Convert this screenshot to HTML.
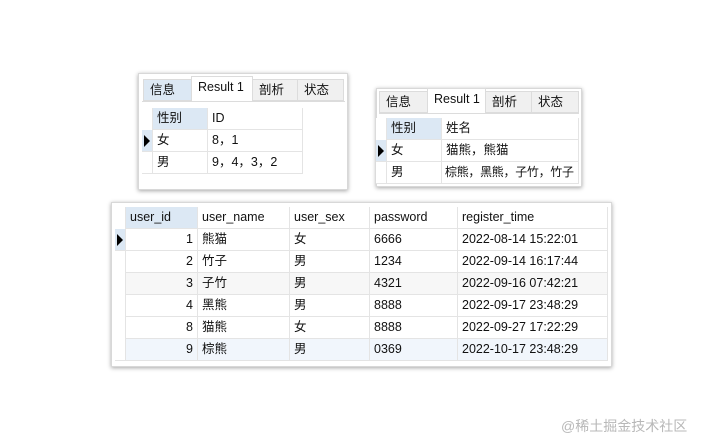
<!DOCTYPE html>
<html><head><meta charset="utf-8"><style>
*{margin:0;padding:0;box-sizing:border-box}
body{width:709px;height:448px;background:#fff;position:relative;overflow:hidden;font-family:"Liberation Sans","Noto Sans CJK SC",sans-serif;font-size:12.5px;color:#111}
.p{position:absolute;background:#fff;border:1px solid #d8d8d8;box-shadow:0 1px 4px rgba(0,0,0,.35)}
.a{position:absolute;white-space:nowrap}
.tab{position:absolute;background:#f0f0f0;border:1px solid #dcdcdc;padding:0 0 0 6px;height:22px;line-height:21px}
.c{position:absolute;border-right:1px solid #e4e4e4;border-bottom:1px solid #e4e4e4;height:22px;line-height:21px;padding:0 4px;white-space:nowrap;overflow:hidden}
.tri{position:absolute;width:0;height:0;border-left:6px solid #000;border-top:6px solid transparent;border-bottom:6px solid transparent}
</style></head><body>

<!-- panel 1 -->
<div class="p" style="left:138px;top:73px;width:210px;height:117px"></div>
<div class="tab" style="left:143px;top:79px;width:50px;background:#dce8f4">信息</div>
<div class="tab" style="left:252px;top:79px;width:46px">剖析</div>
<div class="tab" style="left:297px;top:79px;width:47px">状态</div>
<div class="tab" style="left:191px;top:76px;width:62px;height:25px;background:#fff;border-bottom:none">Result 1</div>
<div style="position:absolute;left:142px;top:101px;width:203px;height:1px;background:#dcdcdc"></div>
<div class="c" style="left:142px;top:108px;width:11px;height:66px;background:#fff"></div>
<div class="c" style="left:142px;top:130px;width:11px;background:#dce8f4"></div>
<div class="tri" style="left:144px;top:135px"></div>
<div class="c" style="left:153px;top:108px;width:55px;background:#dce8f4">性别</div>
<div class="c" style="left:208px;top:108px;width:95px">ID</div>
<div class="c" style="left:153px;top:130px;width:55px">女</div>
<div class="c" style="left:208px;top:130px;width:95px">8，1</div>
<div class="c" style="left:153px;top:152px;width:55px">男</div>
<div class="c" style="left:208px;top:152px;width:95px">9，4，3，2</div>

<!-- panel 2 -->
<div class="p" style="left:376px;top:88px;width:206px;height:99px"></div>
<div class="tab" style="left:379px;top:91px;width:50px;background:#f0f0f0">信息</div>
<div class="tab" style="left:485px;top:91px;width:47px">剖析</div>
<div class="tab" style="left:531px;top:91px;width:48px">状态</div>
<div class="tab" style="left:427px;top:88px;width:59px;height:25px;background:#fff;border-bottom:none">Result 1</div>
<div style="position:absolute;left:379px;top:113px;width:200px;height:1px;background:#dcdcdc"></div>
<div class="c" style="left:376px;top:118px;width:11px;height:66px;background:#fff"></div>
<div class="c" style="left:376px;top:140px;width:11px;background:#dce8f4"></div>
<div class="tri" style="left:378px;top:145px"></div>
<div class="c" style="left:387px;top:118px;width:55px;background:#dce8f4">性别</div>
<div class="c" style="left:442px;top:118px;width:137px">姓名</div>
<div class="c" style="left:387px;top:140px;width:55px">女</div>
<div class="c" style="left:442px;top:140px;width:137px">猫熊，熊猫</div>
<div class="c" style="left:387px;top:162px;width:55px">男</div>
<div class="c" style="left:442px;top:162px;width:137px;padding:0 0 0 3px;font-size:12px;letter-spacing:-0.3px">棕熊，黑熊，子竹，竹子</div>

<!-- panel 3 -->
<div class="p" style="left:111px;top:202px;width:501px;height:165px"></div>
<div class="c" style="left:115px;top:207px;width:11px;height:154px"></div>
<div class="c" style="left:115px;top:229px;width:11px;background:#dce8f4"></div>
<div class="tri" style="left:117px;top:234px"></div>
<div class="c" style="left:126px;top:207px;width:72px;background:#dce8f4">user_id</div>
<div class="c" style="left:198px;top:207px;width:92px">user_name</div>
<div class="c" style="left:290px;top:207px;width:80px">user_sex</div>
<div class="c" style="left:370px;top:207px;width:88px">password</div>
<div class="c" style="left:458px;top:207px;width:150px">register_time</div>

<div style="position:absolute;left:126px;top:273px;width:482px;height:22px;background:#f7f7f7"></div>
<div style="position:absolute;left:126px;top:339px;width:482px;height:22px;background:#f1f6fc"></div>

<div class="c" style="left:126px;top:229px;width:72px;text-align:right">1</div><div class="c" style="left:198px;top:229px;width:92px">熊猫</div><div class="c" style="left:290px;top:229px;width:80px">女</div><div class="c" style="left:370px;top:229px;width:88px">6666</div><div class="c" style="left:458px;top:229px;width:150px">2022-08-14 15:22:01</div>
<div class="c" style="left:126px;top:251px;width:72px;text-align:right">2</div><div class="c" style="left:198px;top:251px;width:92px">竹子</div><div class="c" style="left:290px;top:251px;width:80px">男</div><div class="c" style="left:370px;top:251px;width:88px">1234</div><div class="c" style="left:458px;top:251px;width:150px">2022-09-14 16:17:44</div>
<div class="c" style="left:126px;top:273px;width:72px;text-align:right">3</div><div class="c" style="left:198px;top:273px;width:92px">子竹</div><div class="c" style="left:290px;top:273px;width:80px">男</div><div class="c" style="left:370px;top:273px;width:88px">4321</div><div class="c" style="left:458px;top:273px;width:150px">2022-09-16 07:42:21</div>
<div class="c" style="left:126px;top:295px;width:72px;text-align:right">4</div><div class="c" style="left:198px;top:295px;width:92px">黑熊</div><div class="c" style="left:290px;top:295px;width:80px">男</div><div class="c" style="left:370px;top:295px;width:88px">8888</div><div class="c" style="left:458px;top:295px;width:150px">2022-09-17 23:48:29</div>
<div class="c" style="left:126px;top:317px;width:72px;text-align:right">8</div><div class="c" style="left:198px;top:317px;width:92px">猫熊</div><div class="c" style="left:290px;top:317px;width:80px">女</div><div class="c" style="left:370px;top:317px;width:88px">8888</div><div class="c" style="left:458px;top:317px;width:150px">2022-09-27 17:22:29</div>
<div class="c" style="left:126px;top:339px;width:72px;text-align:right">9</div><div class="c" style="left:198px;top:339px;width:92px">棕熊</div><div class="c" style="left:290px;top:339px;width:80px">男</div><div class="c" style="left:370px;top:339px;width:88px">0369</div><div class="c" style="left:458px;top:339px;width:150px">2022-10-17 23:48:29</div>

<div class="a" style="left:561px;top:416px;font-size:14px;color:#b8b8b8">@稀土掘金技术社区</div>
</body></html>
